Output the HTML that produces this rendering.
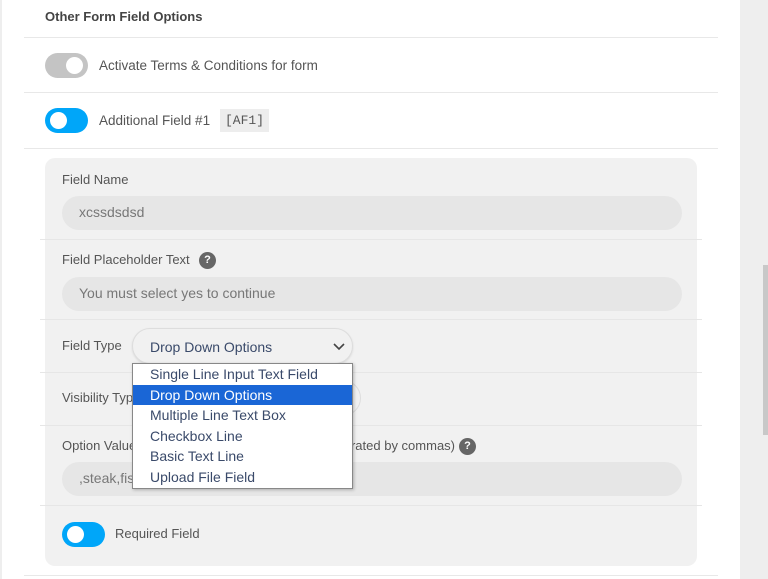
<!DOCTYPE html>
<html><head><style>
*{box-sizing:border-box;margin:0;padding:0}
body{width:768px;height:579px;overflow:hidden;background:#fff;font-family:"Liberation Sans",sans-serif;color:#555;font-size:13px;position:relative}
.a{position:absolute}
.line{position:absolute;height:1px;background:#e8e8e8}
.tg{position:absolute;width:43px;height:25px;border-radius:13px}
.tg i{position:absolute;left:5px;top:4px;width:17px;height:17px;border-radius:50%;background:#fff}
.inp{position:absolute;left:62px;width:620px;height:34px;border-radius:17px;background:#e6e6e6;color:#777;font-size:14px;padding:8px 0 0 17px}
.q{position:absolute;width:17px;height:17px;border-radius:50%;background:#666;color:#fff;font-size:11px;font-weight:bold;text-align:center;line-height:17px}
.dd{position:absolute;left:132px;top:363px;width:221px;height:126px;background:#fff;border:1px solid #888;box-shadow:1px 1px 3px rgba(0,0,0,.25);font-size:14px;color:#3a4a6a}
.dd div{height:20.5px;line-height:20px;padding-left:17px}
</style></head><body>
<div class="a" style="left:0;top:0;width:2px;height:579px;background:#eee"></div>
<div class="a" style="left:740px;top:0;width:28px;height:579px;background:#eee"></div>
<div class="a" style="left:763px;top:265px;width:5px;height:170px;background:#c8c8c8"></div>
<div class="a" style="left:45px;top:9px;font-weight:bold;font-size:13px;color:#444">Other Form Field Options</div>
<div class="line" style="left:24px;top:37px;width:694px"></div>
<div class="tg" style="left:45px;top:53px;background:#c4c4c4"><i style="left:21px"></i></div>
<div class="a" style="left:99px;top:58px;font-size:13.5px">Activate Terms &amp; Conditions for form</div>
<div class="line" style="left:24px;top:92px;width:694px"></div>
<div class="tg" style="left:45px;top:108px;background:#00a6f9"><i></i></div>
<div class="a" style="left:99px;top:113px;font-size:13.5px">Additional Field #1</div>
<div class="a" style="left:220px;top:109px;width:49px;height:23px;background:#ededed;font-family:'Liberation Mono',monospace;font-size:13px;line-height:23px;text-align:center">[AF1]</div>
<div class="line" style="left:24px;top:148px;width:694px"></div>
<div class="a" style="left:45px;top:158px;width:652px;height:408px;background:#f1f1f1;border-radius:10px"></div>
<div class="a" style="left:62px;top:172px">Field Name</div>
<div class="inp" style="top:196px">xcssdsdsd</div>
<div class="line" style="left:40px;top:239px;width:662px;background:#e6e6e6"></div>
<div class="a" style="left:62px;top:252px">Field Placeholder Text</div>
<div class="q" style="left:199px;top:252px">?</div>
<div class="inp" style="top:277px">You must select yes to continue</div>
<div class="line" style="left:40px;top:319px;width:662px;background:#e6e6e6"></div>
<div class="a" style="left:62px;top:338px">Field Type</div>
<div class="a" style="left:132px;top:328px;width:221px;height:36px;border-radius:18px;background:#f1f1f1;border:1px solid #ddd;box-shadow:0 1px 2px rgba(0,0,0,.1);font-size:14px;color:#3a4a6a;padding:10px 0 0 17px">Drop Down Options
<svg class="a" style="left:200px;top:14px" width="12" height="8" viewBox="0 0 12 8"><path d="M1 1l5 5 5-5" stroke="#444" stroke-width="1.6" fill="none"/></svg></div>
<div class="line" style="left:40px;top:372px;width:662px;background:#e6e6e6"></div>
<div class="a" style="left:62px;top:390px">Visibility Type</div>
<div class="a" style="left:132px;top:380px;width:229px;height:36px;border-radius:18px;background:#f1f1f1;border:1px solid #ddd"></div>
<div class="line" style="left:40px;top:425px;width:662px;background:#e6e6e6"></div>
<div class="a" style="left:62px;top:438px">Option Values (enter list of options</div>
<div class="a" style="left:260px;top:438px;width:195px;text-align:right">list them separated by commas)</div>
<div class="q" style="left:459px;top:438px">?</div>
<div class="inp" style="top:462px">,steak,fish</div>
<div class="line" style="left:40px;top:505px;width:662px;background:#e6e6e6"></div>
<div class="tg" style="left:62px;top:522px;background:#00a6f9"><i></i></div>
<div class="a" style="left:115px;top:526px">Required Field</div>
<div class="line" style="left:24px;top:575px;width:694px"></div>
<div class="dd">
<div>Single Line Input Text Field</div>
<div style="background:#1a66d6;color:#fff">Drop Down Options</div>
<div>Multiple Line Text Box</div>
<div>Checkbox Line</div>
<div>Basic Text Line</div>
<div>Upload File Field</div>
</div>
</body></html>
